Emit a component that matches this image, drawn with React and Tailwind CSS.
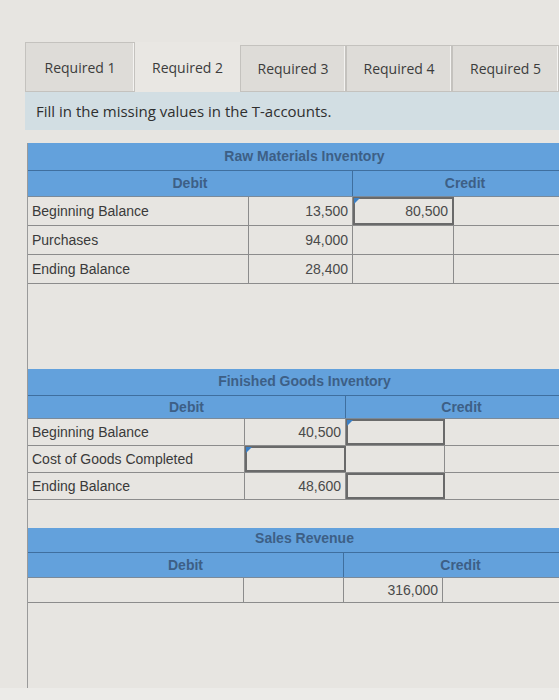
const tabs = ['Required 1', 'Required 2', 'Required 3', 'Required 4', 'Required 5'];

function Marker() {
  return (
    <span className="absolute -left-px -top-px h-0 w-0 border-b-[6px] border-l-[6px] border-b-transparent border-l-[#3b7fc4]" />
  );
}

function Cell({ value, strong, marker, width }) {
  return (
    <div
      className={`relative flex shrink-0 items-center justify-end pr-1 text-[14px] text-[#4a4a4a] ${width} ${
        strong ? 'border-2 border-[#6a6a6a]' : 'border-r border-[#8c8c8c]'
      }`}
    >
      {marker && <Marker />}
      {value}
    </div>
  );
}

function Account({ title, rows, labelW, debitW, creditW, debitSpan, h1, h2, rowH, blank }) {
  return (
    <div className="border-l border-[#9a9a9a]">
      <div className={`flex items-end justify-center border-b border-[#3f6f9f] bg-[#63a1dc] pb-[3px] pl-[22px] text-[14px] font-bold text-[#3d5f86] ${h1}`}>
        {title}
      </div>
      <div className={`flex border-b border-[#7a8a9a] bg-[#63a1dc] text-[14px] font-bold text-[#3d5f86] ${h2}`}>
        <div className={`flex items-center justify-center border-r border-[#3f6f9f] ${debitSpan}`}>Debit</div>
        <div className="flex flex-1 items-center justify-center pl-[18px]">Credit</div>
      </div>
      {rows.map((r, i) => (
        <div key={i} className={`flex border-b border-[#8c8c8c] ${rowH}`}>
          <div className={`flex shrink-0 items-center border-r border-[#8c8c8c] pl-[4px] text-[14px] text-[#3a3a3a] ${labelW}`}>
            {r.label}
          </div>
          <Cell value={r.debit} strong={r.debitStrong} marker={r.debitMarker} width={debitW} />
          <Cell value={r.credit} strong={r.creditStrong} marker={r.creditMarker} width={creditW} />
          <div className="flex-1" />
        </div>
      ))}
      <div className={blank} />
    </div>
  );
}

export default function App() {
  return (
    <div className="h-[700px] w-[559px] overflow-hidden bg-[#e7e5e1] pt-[42px] font-['Liberation_Sans',Arial,sans-serif]">
      <div className="ml-[25px] flex h-[50px] items-stretch font-['Open_Sans',sans-serif]">
        {tabs.map((t, i) => (
          <div
            key={t}
            className={`flex items-center justify-center text-[14px] text-[#3c3c3c] ${
              i === 1
                ? 'w-[105px] bg-[#e9e7e3]'
                : 'border border-[#c4c2be] bg-[#dedcd8] shadow-[inset_-1px_0_0_#f4f3f1] ' + (i === 0 ? 'w-[110px]' : 'mt-[3px] w-[106px]')
            } ${i === 4 ? 'flex-1' : ''}`}
          >
            {t}
          </div>
        ))}
      </div>
      <div className="ml-[25px] flex h-[38px] items-center bg-[#d2dee3] pl-[11px] font-['Open_Sans',sans-serif] text-[15px] text-[#2f2f2f]">
        Fill in the missing values in the T-accounts.
      </div>
      <div className="h-[13px]" />
      <div className="ml-[27px]">
        <Account
          title="Raw Materials Inventory"
          labelW="w-[221px]"
          debitW="w-[104px]"
          creditW="w-[101px]"
          debitSpan="w-[325px]"
          h1="h-[28px]"
          h2="h-[26px]"
          rowH="h-[29px]"
          blank="h-[85px]"
          rows={[
            { label: 'Beginning Balance', debit: '13,500', credit: '80,500', creditStrong: true, creditMarker: true },
            { label: 'Purchases', debit: '94,000' },
            { label: 'Ending Balance', debit: '28,400' },
          ]}
        />
        <Account
          title="Finished Goods Inventory"
          labelW="w-[217px]"
          debitW="w-[101px]"
          creditW="w-[99px]"
          debitSpan="w-[318px]"
          h1="h-[27px]"
          h2="h-[23px]"
          rowH="h-[27px]"
          blank="h-[28px]"
          rows={[
            { label: 'Beginning Balance', debit: '40,500', credit: '', creditStrong: true, creditMarker: true },
            { label: 'Cost of Goods Completed', debit: '', debitStrong: true, debitMarker: true },
            { label: 'Ending Balance', debit: '48,600', creditStrong: true },
          ]}
        />
        <Account
          title="Sales Revenue"
          labelW="w-[216px]"
          debitW="w-[100px]"
          creditW="w-[99px]"
          debitSpan="w-[316px]"
          h1="h-[25px]"
          h2="h-[25px]"
          rowH="h-[25px]"
          blank="h-[85px]"
          rows={[{ label: '', debit: '', credit: '316,000' }]}
        />
      </div>
      <div className="h-[20px] bg-[#ecebe8]" />
    </div>
  );
}
